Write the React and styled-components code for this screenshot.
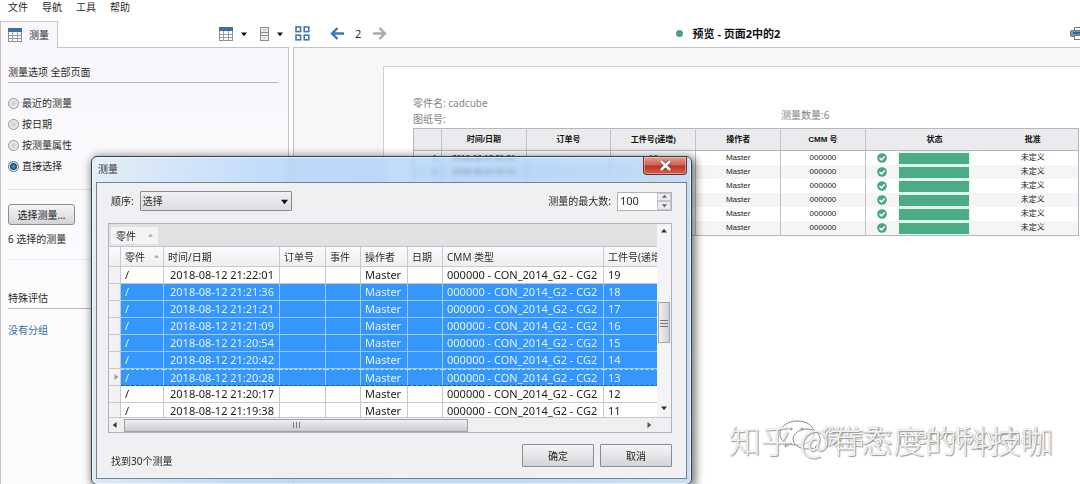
import React, { useState } from "react";
import styled, { createGlobalStyle } from "styled-components";

const GlobalStyle = createGlobalStyle`
  * {
    box-sizing: border-box;
  }
  body {
    margin: 0;
    overflow: hidden;
    background: #fff;
    color: #2b2b2b;
    font-family: "Noto Sans", "Noto Sans CJK SC", sans-serif;
    font-size: 10px;
    line-height: 14px;
  }
  button, input, select {
    font: inherit;
    color: inherit;
  }
`;

const Window = styled.div`
  position: relative;
  display: flex;
  flex-direction: column;
  height: 100vh;
  overflow: hidden;
`;

const MenuBar = styled.nav`
  display: flex;
  gap: 14px;
  padding: 0 8px;
  button {
    padding: 0;
    border: 0;
    background: none;
    line-height: 14px;
  }
`;

const TopRow = styled.div`
  display: flex;
  align-items: flex-end;
  height: 33px;
  flex-shrink: 0;
`;

const TabButton = styled.button`
  display: flex;
  align-items: center;
  gap: 7px;
  width: 58px;
  height: 27px;
  margin-bottom: -1px;
  padding: 0 7px;
  border: 1px solid #c4c2c6;
  border-bottom: 0;
  background: #f9f7fb;
  z-index: 1;
  white-space: nowrap;
`;

const ToolGroup = styled.div`
  display: flex;
  align-items: center;
  height: 27px;
  width: 235px;
  margin-left: 161px;
  flex-shrink: 0;
`;

const ToolButton = styled.button`
  display: flex;
  align-items: center;
  gap: 8px;
  margin-right: ${(props) => props.$space || 0}px;
  padding: 0;
  border: 0;
  background: none;
`;

const PageNumber = styled.span`
  width: 18px;
  font-size: 11px;
`;

const PreviewTitle = styled.div`
  display: flex;
  flex: 1;
  align-items: center;
  justify-content: center;
  gap: 10px;
  height: 27px;
  padding-right: 68px;
  color: #111;
  font-size: 11px;
  font-weight: 700;
`;

const StatusDot = styled.span`
  width: 7px;
  height: 7px;
  border-radius: 50%;
  background: #4fa083;
`;

const PrintButton = styled(ToolButton)`
  width: 10px;
  height: 27px;
  overflow: hidden;
`;

const Main = styled.div`
  display: flex;
  flex: 1;
  gap: 4px;
  min-height: 0;
`;

const Sidebar = styled.aside`
  width: 289px;
  flex-shrink: 0;
  padding: 17px 10px 0 7px;
  border: 1px solid #c4c2c6;
  border-bottom: 0;
  background: linear-gradient(#f9f7fb, #fcfcfd 300px);
`;

const SectionTitle = styled.h2`
  margin: 0;
  padding-bottom: 3px;
  border-bottom: 1px solid #b9b7bb;
  font-size: 10px;
  font-weight: 400;
  line-height: 14px;
`;

const RadioList = styled.div`
  display: flex;
  flex-direction: column;
  gap: 7px;
  padding: 13px 0 16px;
  border-bottom: 1px solid #e0dfe2;
`;

const RadioLabel = styled.label`
  display: flex;
  align-items: center;
  gap: 3px;
  height: 14px;
`;

const Radio = styled.input`
  appearance: none;
  width: 11px;
  height: 11px;
  margin: 0;
  border: 1px solid #929292;
  border-radius: 50%;
  background: radial-gradient(circle, #c9c9c9, #ececec 4px, #fff);

  &:checked {
    border-color: #5b7286;
    background: radial-gradient(circle, #52a9cc 0, #1f4b6c 3px, #dbe8f0 4px);
  }
`;

const SelectionBox = styled.div`
  padding: 14px 0 13px;
  margin-bottom: 31px;
  border-bottom: 1px solid #eceaee;
  p {
    margin: 7px 0 0;
  }
`;

const GreyButton = styled.button`
  width: ${(props) => props.$width}px;
  height: ${(props) => props.$height || 21}px;
  padding: 0;
  border: 1px solid #8d8d90;
  border-radius: ${(props) => props.$radius || 1}px;
  background: linear-gradient(#f4f3f5, #e6e5e8 50%, #d4d3d7);
  color: #1c1c1c;
`;

const GroupLink = styled.a`
  display: inline-block;
  margin-top: 14px;
  color: #2f6f9f;
  text-decoration: none;
`;

const PreviewArea = styled.main`
  display: flex;
  flex: 1;
  min-width: 0;
  padding: 18px 0 0 89px;
  border: 1px solid #c4c2c6;
  border-right: 0;
  border-bottom: 0;
  background: #f7f6f9;
`;

const Sheet = styled.section`
  flex: 1;
  min-width: 0;
  padding: 26px 1px 0 29px;
  border-top: 1px solid #d3d2d5;
  border-left: 1px solid #d3d2d5;
  background: #fff;
`;

const SheetInfo = styled.div`
  display: flex;
  align-items: center;
  height: 35px;
  color: #858585;
  line-height: 16px;
  div {
    width: 368px;
  }
  span {
    padding-top: 8px;
  }
`;

const ReportTable = styled.table`
  width: 100%;
  border: 1px solid #b4b6be;
  border-collapse: collapse;
  table-layout: fixed;
  color: #222;
  font-family: "Liberation Sans", "Noto Sans CJK SC", sans-serif;
  font-size: 8px;
  line-height: 12px;
  text-align: center;

  th {
    height: 22px;
    padding: 0;
    border-bottom: 1px solid #b4b6be;
    background: #ebebed;
    color: #111;
  }
  td {
    height: 14px;
    padding: 0;
  }
  th:nth-child(-n + 6),
  td:nth-child(-n + 6) {
    border-right: 1px solid #c0c2ca;
  }
  th:last-child,
  td:last-child {
    padding-right: 16px;
  }
  td:first-child {
    padding-right: 4px;
    text-align: right;
  }
  tbody tr:nth-child(even) {
    background: #f5f5f6;
  }
`;

const StatusCell = styled.div`
  display: flex;
  align-items: center;
  gap: 11px;
  height: 14px;
  padding-left: 11px;
  svg {
    flex-shrink: 0;
  }
`;

const StatusBar = styled.span`
  width: 72px;
  height: 14px;
  border: solid #dff7ed;
  border-width: 2px 1px 1px;
  background: #4cac86;
`;

const Dialog = styled.div`
  position: absolute;
  top: 156px;
  left: 91px;
  width: 601px;
  padding: 0 4px 5px;
  border: 1px solid #33414c;
  border-radius: 6px;
  background: linear-gradient(
    100deg,
    rgba(226, 237, 246, 0.94),
    rgba(150, 199, 248, 0.6) 30%,
    rgba(147, 195, 247, 0.6) 70%,
    rgba(195, 220, 242, 0.9)
  );
  backdrop-filter: blur(2px);
  box-shadow:
    inset 0 0 0 1px rgba(255, 255, 255, 0.6),
    2px 2px 8px 2px rgba(0, 0, 0, 0.5);
`;

const DialogHeader = styled.header`
  display: flex;
  justify-content: space-between;
  height: 25px;
  padding-left: 2px;
  line-height: 25px;
`;

const CloseButton = styled.button`
  display: flex;
  align-items: center;
  justify-content: center;
  width: 44px;
  height: 18px;
  padding: 0;
  border: 1px solid #6e3431;
  border-top: 0;
  border-radius: 0 0 4px 4px;
  background: linear-gradient(#e3a096, #cf5f50 48%, #bd3322 52%, #d4614b);
  box-shadow: inset 0 0 0 1px rgba(255, 255, 255, 0.35);
`;

const DialogBody = styled.div`
  padding: 8px 14px 10px 11px;
  border: 1px solid #75848f;
  background: #f0eff1;
`;

const FilterRow = styled.div`
  display: flex;
  align-items: center;
  gap: 6px;
  padding-left: 3px;
  margin-bottom: 12px;
  height: 20px;
`;

const SelectWrap = styled.div`
  position: relative;
  margin-right: auto;
  svg {
    position: absolute;
    top: 7px;
    right: 4px;
    pointer-events: none;
  }
`;

const OrderSelect = styled.select`
  appearance: none;
  display: block;
  width: 152px;
  height: 20px;
  padding: 0 2px;
  border: 1px solid #8b8b8e;
  border-radius: 1px;
  background: linear-gradient(#efeef0, #dddce0);
`;

const Spinner = styled.div`
  display: flex;
  width: 55px;
  height: 19px;
  border: 1px solid #b3b2b6;
  background: #fff;
  input {
    flex: 1;
    min-width: 0;
    padding: 0 2px;
    border: 0;
    outline: 0;
    background: none;
    font-size: 11px;
  }
  div {
    display: flex;
    flex-direction: column;
    width: 14px;
  }
  button {
    display: flex;
    flex: 1;
    align-items: center;
    justify-content: center;
    padding: 0;
    border: 1px solid #c5c4c8;
    background: #ecebee;
  }
`;

const GridBox = styled.div`
  display: grid;
  grid-template-columns: 1fr 14px;
  grid-template-rows: 193px 15px;
  border: 1px solid #b3b2b6;
  background: #f0eff1;
`;

const GridView = styled.div`
  min-width: 0;
  overflow: hidden;
  background: #fff;
`;

const GroupPanel = styled.div`
  height: 23px;
  padding: 3px 2px;
  border-bottom: 1px solid #c4c3c7;
  background: #e1e0e3;
`;

const GroupChip = styled.button`
  display: flex;
  align-items: center;
  justify-content: space-between;
  width: 47px;
  height: 17px;
  padding: 0 5px;
  border: 0;
  background: #f4f3f6;
`;

const MeasureTable = styled.table`
  width: 100%;
  border-collapse: separate;
  border-spacing: 0;
  table-layout: fixed;
  white-space: nowrap;

  th,
  td {
    overflow: hidden;
    padding: 0 4px;
    border-right: 1px solid #c9c8cc;
    border-bottom: 1px solid #c9c8cc;
    text-align: left;
    font-weight: 400;
  }
  th {
    height: 20px;
    background: linear-gradient(#fbfafc, #efeef1);
  }
  td {
    height: 17px;
    font-size: 11px;
    line-height: 16px;
  }
  td:first-child {
    background: #f2f1f4;
  }
  td:nth-child(3) {
    padding-left: 6px;
  }
  th:last-child,
  td:last-child {
    border-right: 0;
    text-overflow: clip;
  }
`;

const SortHeader = styled.div`
  display: flex;
  align-items: center;
  justify-content: space-between;
`;

const MeasureRow = styled.tr`
  td:not(:first-child) {
    background: ${(props) => (props.$selected ? "#3597fc" : "#fff")};
    color: ${(props) => (props.$selected ? "#e2f1ff" : "#222")};
    border-color: ${(props) => (props.$selected ? "#9ccbf8" : "#c9c8cc")};
    ${(props) => props.$current && "border-bottom: 1px dashed #24537f;"}
    ${(props) => props.$current && "border-top: 1px dashed #bddcfb;"}
  }
  td {
    ${(props) => props.$current && "line-height: 15px;"}
  }
  td:first-child svg {
    display: block;
  }
`;

const VerticalScroll = styled.div`
  display: flex;
  flex-direction: column;
  align-items: center;
  padding: 4px 0 6px;
  background: #f4f3f5;
`;

const HorizontalScroll = styled.div`
  display: flex;
  align-items: center;
  grid-column: 1 / -1;
  padding: 0 19px 0 3px;
  border-top: 1px solid #c9c8cc;
  background: #efeef0;
`;

const Thumb = styled.span`
  display: flex;
  align-items: center;
  justify-content: center;
  border: 1px solid #a3a2a6;
  color: #777;
`;

const VerticalThumb = styled(Thumb)`
  width: 12px;
  height: 41px;
  margin: 68px 0 auto;
  background: linear-gradient(90deg, #f2f1f3, #cfced2);
`;

const HorizontalThumb = styled(Thumb)`
  width: 344px;
  height: 13px;
  margin: 0 auto 0 6px;
  background: linear-gradient(#efeef0, #cbcace);
`;

const DialogFooter = styled.footer`
  display: flex;
  align-items: flex-start;
  gap: 6px;
  margin-top: 11px;
  padding-left: 3px;
  p {
    margin: 10px auto 0 0;
  }
`;

const Watermark = styled.div`
  position: absolute;
  right: 27px;
  bottom: 22px;
  color: rgba(255, 255, 255, 0.85);
  font-family: "Noto Sans CJK SC", sans-serif;
  font-size: 32px;
  font-weight: 300;
  line-height: 46px;
  text-shadow: 1px 1px 1px #999, 0 0 1px #bbb;
  white-space: nowrap;
`;

const AccountMark = styled.div`
  position: absolute;
  right: 40px;
  bottom: 32px;
  display: flex;
  align-items: center;
  color: #fff;
  font-family: "Noto Sans CJK SC", sans-serif;
  font-size: 21px;
  line-height: 30px;
  text-shadow: 0 0 1px #777, 1px 1px 1px #999;
  white-space: nowrap;
`;

const columns = [12, 43, 116, 46, 35, 47, 35, 161, 55];

const measurements = [
  { time: "2018-08-12 21:22:01", part: 19 },
  { time: "2018-08-12 21:21:36", part: 18, selected: true },
  { time: "2018-08-12 21:21:21", part: 17, selected: true },
  { time: "2018-08-12 21:21:09", part: 16, selected: true },
  { time: "2018-08-12 21:20:54", part: 15, selected: true },
  { time: "2018-08-12 21:20:42", part: 14, selected: true },
  { time: "2018-08-12 21:20:28", part: 13, selected: true, current: true },
  { time: "2018-08-12 21:20:17", part: 12 },
  { time: "2018-08-12 21:19:38", part: 11 },
];

const radioOptions = ["最近的测量", "按日期", "按测量属性", "直接选择"];

function Arrow({ dir = "down", size = 7, color = "#111" }) {
  const points = {
    down: "0,2 8,2 4,7",
    up: "0,6 8,6 4,1",
    left: "6,0 6,8 1,4",
    right: "2,0 2,8 7,4",
  };
  return (
    <svg width={size} height={size} viewBox="0 0 8 8">
      <polygon points={points[dir]} fill={color} />
    </svg>
  );
}

function TableIcon() {
  return (
    <svg width="14" height="14" viewBox="0 0 14 14">
      <rect x="0.5" y="0.5" width="13" height="13" fill="#fafafa" stroke="#8a8d92" />
      <rect width="14" height="4" fill="#3f6f9f" />
      <path d="M0 7.5h14M0 10.5h14M4.5 4v10M9.5 4v10" stroke="#9a9da2" />
    </svg>
  );
}

function FormIcon() {
  return (
    <svg width="9" height="14" viewBox="0 0 9 14">
      <rect x="0.5" y="0.5" width="8" height="13" fill="#eee" stroke="#8a8a8a" />
      <path d="M0 5.5h9M0 8.5h9" stroke="#8a8a8a" />
      <path d="M2 3h5M3 11h3" stroke="#b8b8b8" />
    </svg>
  );
}

function TilesIcon() {
  return (
    <svg width="15" height="15" viewBox="0 0 15 15" fill="none" stroke="#4479a8" strokeWidth="1.6">
      <rect x="1" y="1" width="4.6" height="4.6" />
      <rect x="9.2" y="1" width="4.6" height="4.6" />
      <rect x="1" y="9.2" width="4.6" height="4.6" />
      <rect x="9.2" y="9.2" width="4.6" height="4.6" />
    </svg>
  );
}

function PageArrow({ back }) {
  return (
    <svg width="14" height="13" viewBox="0 0 14 13" fill="none" stroke={back ? "#3f78ab" : "#aaa"} strokeWidth="2.4">
      {back ? <path d="M14 6.5H2M7.5 1L2 6.5L7.5 12" /> : <path d="M0 6.5H12M6.5 1L12 6.5L6.5 12" />}
    </svg>
  );
}

function PrinterIcon() {
  return (
    <svg width="17" height="15" viewBox="0 0 17 15" style={{ flexShrink: 0 }}>
      <path d="M4.5 4V1.5h8V4" fill="#fff" stroke="#777" />
      <rect x="0.5" y="4.5" width="16" height="6" rx="1" fill="#7b98b3" stroke="#68737f" />
      <path d="M3 6h11v2H3z" fill="#35648f" />
      <rect x="4.5" y="9.5" width="8" height="4" fill="#fff" stroke="#777" />
    </svg>
  );
}

function CheckIcon() {
  return (
    <svg width="10" height="10" viewBox="0 0 10 10">
      <circle cx="5" cy="5" r="4.8" fill="#4ba682" />
      <path d="M2.5 5l2 1.9L7.6 3.4" fill="none" stroke="#fff" strokeWidth="1.5" />
    </svg>
  );
}

function Grip({ vertical }) {
  return (
    <svg width="8" height="8" viewBox="0 0 8 8" stroke="#777">
      <path d={vertical ? "M0 1.5h8M0 4.5h8M0 7.5h8" : "M1.5 1v6M4.5 1v6M7.5 1v6"} />
    </svg>
  );
}

function WechatIcon() {
  return (
    <svg width="44" height="34" viewBox="0 0 44 34" fill="#fff" fillOpacity="0.5" stroke="#8a8a8a">
      <path d="M19 3C9 3 2 9 2 16c0 4 2 7 6 9l-1 4 5-3c2 1 5 1 7 1 10 0 17-5 17-12S29 3 19 3z" />
      <path d="M29 11c-8 0-14 5-14 10s6 10 14 10c2 0 4 0 5-1l4 2-1-3c3-2 5-5 5-8 0-5-5-10-13-10z" />
      <circle cx="13" cy="11" r="1" />
      <circle cx="24" cy="11" r="1" />
    </svg>
  );
}

function SidePanel() {
  const [mode, setMode] = useState("直接选择");

  return (
    <Sidebar>
      <SectionTitle>测量选项 全部页面</SectionTitle>
      <RadioList>
        {radioOptions.map((option) => (
          <RadioLabel key={option}>
            <Radio
              type="radio"
              name="mode"
              checked={mode === option}
              onChange={() => setMode(option)}
            />
            {option}
          </RadioLabel>
        ))}
      </RadioList>
      <SelectionBox>
        <GreyButton $width={67} $radius={3}>选择测量...</GreyButton>
        <p>6 选择的测量</p>
      </SelectionBox>
      <SectionTitle>特殊评估</SectionTitle>
      <GroupLink href="#group">没有分组</GroupLink>
    </Sidebar>
  );
}

function Report() {
  return (
    <Sheet>
      <SheetInfo>
        <div>
          零件名: cadcube
          <br />
          图纸号:
        </div>
        <span>测量数量:6</span>
      </SheetInfo>
      <ReportTable>
        <colgroup>
          <col style={{ width: "4.2%" }} />
          <col span="5" style={{ width: "12.75%" }} />
          <col style={{ width: "20.75%" }} />
          <col />
        </colgroup>
        <thead>
          <tr>
            <th></th>
            <th>时间/日期</th>
            <th>订单号</th>
            <th>工件号(递增)</th>
            <th>操作者</th>
            <th>CMM 号</th>
            <th>状态</th>
            <th>批准</th>
          </tr>
        </thead>
        <tbody>
          {measurements
            .filter((item) => item.selected)
            .map((item, index) => (
              <tr key={item.part}>
                <td>{index + 1}</td>
                <td>{item.time.slice(0, 16)}</td>
                <td></td>
                <td>{item.part}</td>
                <td>Master</td>
                <td>000000</td>
                <td>
                  <StatusCell>
                    <CheckIcon />
                    <StatusBar />
                  </StatusCell>
                </td>
                <td>未定义</td>
              </tr>
            ))}
        </tbody>
      </ReportTable>
    </Sheet>
  );
}

function MeasureGrid() {
  return (
    <GridBox>
      <GridView>
        <GroupPanel>
          <GroupChip>
            零件
            <Arrow dir="up" size={5} color="#aaa" />
          </GroupChip>
        </GroupPanel>
        <MeasureTable>
          <colgroup>
            {columns.map((width, index) => (
              <col key={index} style={{ width }} />
            ))}
          </colgroup>
          <thead>
            <tr>
              <th></th>
              <th>
                <SortHeader>
                  零件
                  <Arrow dir="up" size={5} color="#aaa" />
                </SortHeader>
              </th>
              <th>时间/日期</th>
              <th>订单号</th>
              <th>事件</th>
              <th>操作者</th>
              <th>日期</th>
              <th>CMM 类型</th>
              <th>工件号(递增)</th>
            </tr>
          </thead>
          <tbody>
            {measurements.map((item) => (
              <MeasureRow key={item.part} $selected={item.selected} $current={item.current}>
                <td>{item.current && <Arrow dir="right" size={6} color="#999" />}</td>
                <td>/</td>
                <td>{item.time}</td>
                <td></td>
                <td></td>
                <td>Master</td>
                <td></td>
                <td>000000 - CON_2014_G2 - CG2</td>
                <td>{item.part}</td>
              </MeasureRow>
            ))}
          </tbody>
        </MeasureTable>
      </GridView>
      <VerticalScroll>
        <Arrow dir="up" size={6} color="#333" />
        <VerticalThumb>
          <Grip vertical />
        </VerticalThumb>
        <Arrow size={6} color="#333" />
      </VerticalScroll>
      <HorizontalScroll>
        <Arrow dir="left" size={6} color="#333" />
        <HorizontalThumb>
          <Grip />
        </HorizontalThumb>
        <Arrow dir="right" size={6} color="#555" />
      </HorizontalScroll>
    </GridBox>
  );
}

function MeasureDialog() {
  const [max, setMax] = useState(100);

  return (
    <Dialog role="dialog" aria-label="测量">
      <DialogHeader>
        测量
        <CloseButton aria-label="关闭">
          <svg width="13" height="11" viewBox="0 0 13 11">
            <path d="M2 1l9 9M11 1l-9 9" stroke="#6d3a36" strokeWidth="4" />
            <path d="M2 1l9 9M11 1l-9 9" stroke="#fff" strokeWidth="2.6" />
          </svg>
        </CloseButton>
      </DialogHeader>
      <DialogBody>
        <FilterRow>
          <label htmlFor="order">顺序:</label>
          <SelectWrap>
            <OrderSelect id="order">
              <option>选择</option>
            </OrderSelect>
            <Arrow size={7} />
          </SelectWrap>
          <label htmlFor="max">测量的最大数:</label>
          <Spinner>
            <input id="max" value={max} onChange={(e) => setMax(Number(e.target.value) || 0)} />
            <div>
              <button aria-label="增加" onClick={() => setMax(max + 1)}>
                <Arrow dir="up" size={5} color="#666" />
              </button>
              <button aria-label="减少" onClick={() => setMax(max - 1)}>
                <Arrow size={5} color="#666" />
              </button>
            </div>
          </Spinner>
        </FilterRow>
        <MeasureGrid />
        <DialogFooter>
          <p>找到30个测量</p>
          <GreyButton $width={72} $height={23}>确定</GreyButton>
          <GreyButton $width={72} $height={23}>取消</GreyButton>
        </DialogFooter>
      </DialogBody>
    </Dialog>
  );
}

function App() {
  return (
    <Window>
      <GlobalStyle />
      <MenuBar>
        <button>文件</button>
        <button>导航</button>
        <button>工具</button>
        <button>帮助</button>
      </MenuBar>
      <TopRow>
        <TabButton>
          <TableIcon />
          测量
        </TabButton>
        <ToolGroup>
          <ToolButton $space={13} aria-label="表格">
            <TableIcon />
            <Arrow size={6} />
          </ToolButton>
          <ToolButton $space={12} aria-label="表单">
            <FormIcon />
            <Arrow size={6} />
          </ToolButton>
          <ToolButton $space={20} aria-label="平铺">
            <TilesIcon />
          </ToolButton>
          <ToolButton $space={11} aria-label="上一页">
            <PageArrow back />
          </ToolButton>
          <PageNumber>2</PageNumber>
          <ToolButton aria-label="下一页">
            <PageArrow />
          </ToolButton>
        </ToolGroup>
        <PreviewTitle>
          <StatusDot />
          预览 - 页面2中的2
        </PreviewTitle>
        <PrintButton aria-label="打印">
          <PrinterIcon />
        </PrintButton>
      </TopRow>
      <Main>
        <SidePanel />
        <PreviewArea>
          <Report />
        </PreviewArea>
      </Main>
      <MeasureDialog />
      <AccountMark>
        <WechatIcon />
        微信号: metrologychat
      </AccountMark>
      <Watermark>知乎 @有态度的科技咖</Watermark>
    </Window>
  );
}

export default App;
